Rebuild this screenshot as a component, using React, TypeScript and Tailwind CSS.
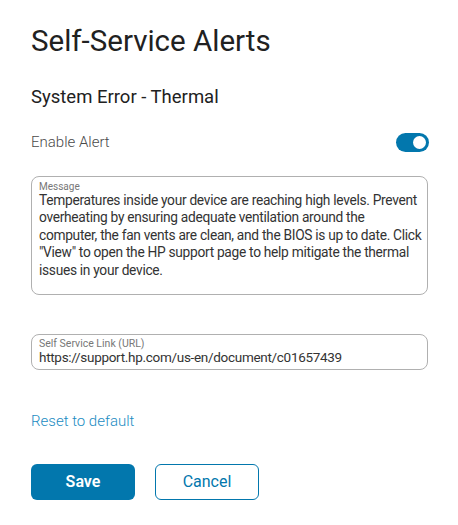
import React, { useState } from 'react';

const MESSAGE_LINES = [
  'Temperatures inside your device are reaching high levels. Prevent',
  'overheating by ensuring adequate ventilation around the',
  'computer, the fan vents are clean, and the BIOS is up to date. Click',
  '"View" to open the HP support page to help mitigate the thermal',
  'issues in your device.',
];

function Toggle({ on, onChange }: { on: boolean; onChange: () => void }) {
  return (
    <button
      onClick={onChange}
      className={`relative flex h-[19px] w-[33px] items-center rounded-full px-[3px] ${
        on ? 'justify-end bg-[#0277ad]' : 'justify-start bg-gray-400'
      }`}
    >
      <span className="block h-[13px] w-[13px] rounded-full bg-white" />
    </button>
  );
}

export default function App() {
  const [enabled, setEnabled] = useState(true);

  return (
    <div className="min-h-screen w-full bg-white font-['Roboto',sans-serif] text-[#212121]">
      <div className="flex flex-col px-[31px] pt-[24px]">
        <h1 className="text-[29.5px] leading-[34px] font-normal">Self-Service Alerts</h1>

        <h2 className="mt-[27px] text-[18.5px] leading-[24px] font-normal">System Error - Thermal</h2>

        <div className="mt-[22px] mr-[-2px] flex items-center justify-between">
          <span className="text-[15px] font-light text-[#4a4a4a]">Enable Alert</span>
          <Toggle on={enabled} onChange={() => setEnabled(!enabled)} />
        </div>

        <div className="mt-[22px] mr-[-1px] flex h-[119px] flex-col rounded-[8px] border border-[#b0b0b0] px-[7px] pt-[4px]">
          <span className="text-[10px] leading-[11px] text-[#777]">Message</span>
          <p className="text-[13.75px] leading-[17.6px] tracking-[-0.3px] whitespace-nowrap text-[#333]">
            {MESSAGE_LINES.map((line, i) => (
              <span key={i} className="block">
                {line}
              </span>
            ))}
          </p>
        </div>

        <div className="mt-[39px] mr-[-1px] flex h-[36px] flex-col rounded-[8px] border border-[#b0b0b0] px-[7px] pt-[3px]">
          <span className="text-[10.5px] leading-[11px] text-[#777]">Self Service Link (URL)</span>
          <span className="text-[13.5px] leading-[17px] tracking-[-0.3px] text-[#333]">
            https://support.hp.com/us-en/document/c01657439
          </span>
        </div>

        <a className="mt-[40px] self-start text-[15px] font-light text-[#1a8bc2]">Reset to default</a>

        <div className="mt-[32px] flex gap-[20px]">
          <button className="h-[36px] w-[104px] rounded-[6px] bg-[#0277ad] text-[16px] font-semibold text-white">
            Save
          </button>
          <button className="h-[36px] w-[104px] rounded-[6px] border border-[#0277ad] bg-white text-[16px] text-[#0277ad]">
            Cancel
          </button>
        </div>
      </div>
    </div>
  );
}
